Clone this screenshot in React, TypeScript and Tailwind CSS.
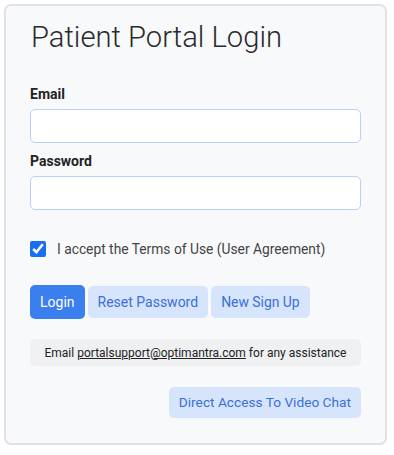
import React from "react";

export default function App() {
  return (
    <div className="w-[394px] h-[455px] bg-white p-[4px]" style={{ fontFamily: "Roboto, 'Liberation Sans', sans-serif" }}>
      <div className="w-[383px] border-2 border-[#e1e2e6] rounded-[7px] bg-[#f8f9fb] px-[24px] pt-[13px] pb-[25px] flex flex-col">
        <h1 className="text-[29.2px] leading-[36px] font-light text-[#2a2a2a] ml-[1px]">Patient Portal Login</h1>

        <label className="mt-[29px] text-[14px] leading-[20px] font-bold text-[#222]">Email</label>
        <input type="email" className="mt-[5px] h-[34px] w-full bg-white border border-[#bccffa] rounded-[5px] outline-none px-2" />

        <label className="mt-[8px] text-[14px] leading-[20px] font-bold text-[#222]">Password</label>
        <input type="password" className="mt-[5px] h-[34px] w-full bg-white border border-[#bccffa] rounded-[5px] outline-none px-2" />

        <div className="mt-[29px] h-[20px] flex items-center">
          <input type="checkbox" defaultChecked className="w-[16px] h-[16px] m-0 accent-[#1a6ff0]" />
          <span className="ml-[11px] text-[13.8px] leading-[20px] text-[#444]">I accept the Terms of Use (User Agreement)</span>
        </div>

        <div className="mt-[26px] flex items-center gap-[3px]">
          <button className="h-[34px] px-[10px] rounded-[5px] bg-[#3b7eed] text-white text-[14px]">Login</button>
          <button className="h-[32px] px-[10px] rounded-[5px] bg-[#d6e5fc] text-[#3b6fd9] text-[14px]">Reset Password</button>
          <button className="h-[32px] px-[10px] rounded-[5px] bg-[#d6e5fc] text-[#3b6fd9] text-[13.9px]">New Sign Up</button>
        </div>

        <div className="mt-[20px] h-[27px] rounded-[5px] bg-[#eff0f2] flex items-center justify-center text-[12px] text-[#222]">
          <span>Email <span className="underline">portalsupport@optimantra.com</span> for any assistance</span>
        </div>

        <div className="mt-[21px] flex justify-end">
          <button className="h-[31px] px-[10px] rounded-[5px] bg-[#d6e5fc] text-[#3b6fd9] text-[13.7px]">Direct Access To Video Chat</button>
        </div>
      </div>
    </div>
  );
}
